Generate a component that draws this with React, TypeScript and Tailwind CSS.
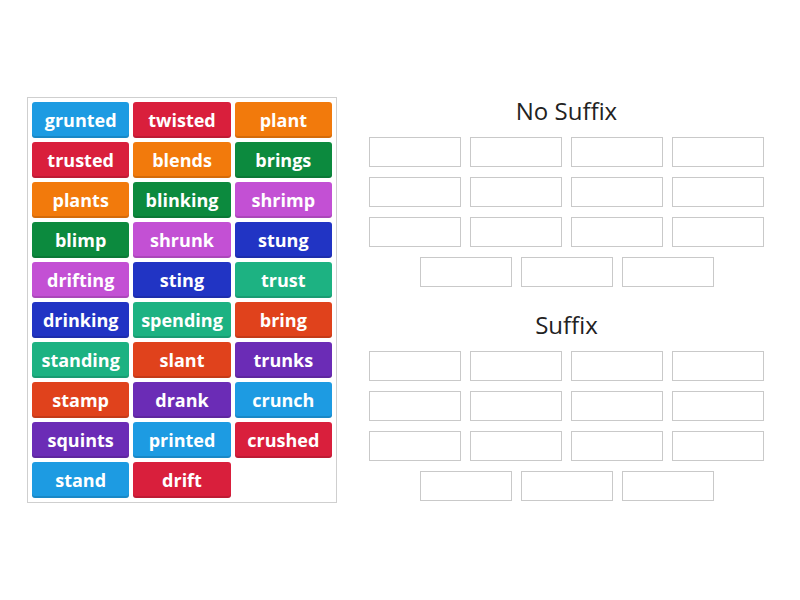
const palette = {
  blue: "bg-[#1d9be2]",
  red: "bg-[#d91f3c]",
  orange: "bg-[#f27a0c]",
  green: "bg-[#0c8a3e]",
  magenta: "bg-[#c350d4]",
  navy: "bg-[#2134c4]",
  teal: "bg-[#1db282]",
  rust: "bg-[#e0421c]",
  purple: "bg-[#6b2cb6]",
};

type Tone = keyof typeof palette;

const tiles: [string, Tone][] = [
  ["grunted", "blue"],
  ["twisted", "red"],
  ["plant", "orange"],
  ["trusted", "red"],
  ["blends", "orange"],
  ["brings", "green"],
  ["plants", "orange"],
  ["blinking", "green"],
  ["shrimp", "magenta"],
  ["blimp", "green"],
  ["shrunk", "magenta"],
  ["stung", "navy"],
  ["drifting", "magenta"],
  ["sting", "navy"],
  ["trust", "teal"],
  ["drinking", "navy"],
  ["spending", "teal"],
  ["bring", "rust"],
  ["standing", "teal"],
  ["slant", "rust"],
  ["trunks", "purple"],
  ["stamp", "rust"],
  ["drank", "purple"],
  ["crunch", "blue"],
  ["squints", "purple"],
  ["printed", "blue"],
  ["crushed", "red"],
  ["stand", "blue"],
  ["drift", "red"],
];

const Tile = ({ word, tone }: { word: string; tone: Tone }) => (
  <div
    className={`${palette[tone]} flex h-9 items-center justify-center rounded-[3px] text-[18px] font-bold text-white shadow-[inset_0_-2px_0_rgba(0,0,0,0.12)]`}
  >
    {word}
  </div>
);

// one drop group: heading + 15 empty slots
const Group = ({ title, className = "" }: { title: string; className?: string }) => (
  <div className={className}>
    <h2 className="mb-[10px] h-8 text-center text-[24px] leading-8 text-[#222]">
      {title}
    </h2>
    <div className="flex flex-wrap justify-center gap-x-[9px] gap-y-[10px]">
      {Array.from({ length: 15 }).map((_, i) => (
        <div
          key={i}
          className="h-[30px] w-[92px] border border-[#c9c9c9] bg-white"
        />
      ))}
    </div>
  </div>
);

export default function App() {
  return (
    <div
      className="flex h-[600px] w-[800px] items-start bg-white"
      style={{ fontFamily: "'Open Sans', 'Liberation Sans', sans-serif" }}
    >
      <div className="ml-[27px] mt-[97px] w-[310px] border border-[#cfcfcf] p-1">
        <div className="grid grid-cols-3 gap-1">
          {tiles.map(([word, tone]) => (
            <Tile key={word} word={word} tone={tone} />
          ))}
        </div>
      </div>

      <div className="ml-[32px] mt-[95px] w-[395px]">
        <Group title="No Suffix" />
        <Group title="Suffix" className="mt-[22px]" />
      </div>
    </div>
  );
}
